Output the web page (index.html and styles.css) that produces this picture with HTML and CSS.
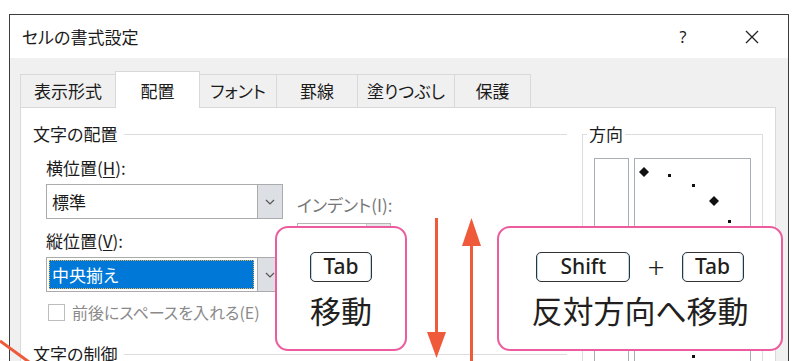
FILE: index.html
```html
<!DOCTYPE html>
<html lang="ja">
<head>
  <meta charset="UTF-8" />
  <title>セルの書式設定</title>
  <link rel="stylesheet" href="styles.css">
</head>
<body>
<div class="page">

  <!-- ダイアログ本体 -->
  <div class="dialog">
    <div class="titlebar">
      <span class="title">セルの書式設定</span>
      <span class="help">?</span>
      <span class="close">
        <svg width="14" height="14" viewBox="0 0 14 14"><path d="M1 1 L13 13 M13 1 L1 13" stroke="#222" stroke-width="1.3" fill="none"/></svg>
      </span>
    </div>

    <div class="dialog-body">
      <div class="tabs">
        <div class="tab tab-number">表示形式</div>
        <div class="tab tab-align active">配置</div>
        <div class="tab tab-font">フォント</div>
        <div class="tab tab-border">罫線</div>
        <div class="tab tab-fill">塗りつぶし</div>
        <div class="tab tab-protect">保護</div>
      </div>

      <div class="pane">
        <div class="align-col">
          <div class="group-head"><span>文字の配置</span><i class="rule"></i></div>

          <div class="fields">
            <div class="col-main">
              <div class="label">横位置(<u>H</u>):</div>
              <div class="select">
                <span class="value">標準</span>
                <span class="drop"><svg width="10" height="6" viewBox="0 0 10 6"><path d="M1 1 L5 5 L9 1" fill="none" stroke="#555" stroke-width="1.2"/></svg></span>
              </div>
              <div class="label label-next">縦位置(<u>V</u>):</div>
              <div class="select">
                <span class="value selected">中央揃え</span>
                <span class="drop"><svg width="10" height="6" viewBox="0 0 10 6"><path d="M1 1 L5 5 L9 1" fill="none" stroke="#555" stroke-width="1.2"/></svg></span>
              </div>
              <div class="check"><span class="box"></span>前後にスペースを入れる(E)</div>
            </div>

            <div class="col-indent">
              <div class="label dim">インデント(I):</div>
              <div class="spin"><span class="spin-btn"></span></div>
            </div>
          </div>

          <div class="group-head group-next"><span>文字の制御</span><i class="rule"></i></div>
        </div>

        <div class="orient">
          <div class="orient-label">方向</div>
          <div class="vert-box"></div>
          <div class="angle-box">
            <svg width="115" height="240" viewBox="1 1 115 240">
              <polygon points="10,9 15,14 10,19 5,14" />
              <rect x="34" y="16" width="3" height="3" />
              <rect x="58" y="26" width="3" height="3" />
              <polygon points="80,38 85,43 80,48 75,43" />
              <rect x="94" y="62" width="3" height="3" />
              <rect x="104" y="86" width="3" height="3" />
              <polygon points="109,108 114,113 109,118 104,113" />
              <rect x="104" y="137" width="3" height="3" />
              <rect x="94" y="161" width="3" height="3" />
              <polygon points="80,178 85,183 80,188 75,183" />
              <rect x="58" y="197" width="3" height="3" />
              <rect x="34" y="207" width="3" height="3" />
              <polygon points="10,207 15,212 10,217 5,212" />
            </svg>
          </div>
        </div>
      </div>
    </div>
  </div>

  <!-- 矢印 -->
  <svg class="arrows" width="800" height="361" viewBox="0 0 800 361">
    <line x1="0" y1="341" x2="29" y2="362" stroke="#ef5a3b" stroke-width="3"/>
    <line x1="436.5" y1="218" x2="436.5" y2="336" stroke="#ef5a3b" stroke-width="3"/>
    <polygon points="427,332 446,332 436.5,358" fill="#ef5a3b"/>
    <line x1="471.5" y1="362" x2="471.5" y2="243" stroke="#ef5a3b" stroke-width="3"/>
    <polygon points="462,246 481,246 471.5,218" fill="#ef5a3b"/>
  </svg>

  <!-- 吹き出し -->
  <div class="callout callout-tab">
    <div class="keys"><span class="key">Tab</span></div>
    <div class="action">移動</div>
  </div>

  <div class="callout callout-shift">
    <div class="keys">
      <span class="key key-wide">Shift</span>
      <span class="plus">+</span>
      <span class="key">Tab</span>
    </div>
    <div class="action">反対方向へ移動</div>
  </div>

</div>
</body>
</html>
```

FILE: styles.css
```css
* { box-sizing: border-box; }
body { margin: 0; background: #fff; font-family: "Noto Sans CJK JP", "Noto Sans", sans-serif; color: #1b1b1b; }
.page { position: relative; width: 800px; height: 361px; overflow: hidden; padding: 14px 0 0 9px; }

/* dialog */
.dialog {
  width: 780px; height: 420px;
  border: 1px solid #3d3d3d; background: #f0f0f0;
  font-feature-settings: "palt";
}
.titlebar { height: 43px; background: #fff; display: flex; align-items: center; padding-left: 12px; }
.title { flex: 1; font-size: 17px; line-height: 22px; }
.help { width: 20px; text-align: center; margin-right: 52px; font-family: "Noto Sans", sans-serif; font-size: 16px; line-height: 20px; }
.close { width: 14px; height: 14px; margin-right: 29px; display: flex; }

.dialog-body { padding: 13px 12px 0 10px; }

.tabs { display: flex; align-items: flex-end; height: 36px; }
.tab {
  height: 33px; margin-left: -1px;
  border: 1px solid #d9d9d9; border-bottom: none;
  display: flex; align-items: center; justify-content: center;
  font-size: 17px; line-height: 22px;
}
.tab:first-child { margin-left: 0; }
.tab.active { height: 37px; margin-bottom: -1px; padding-top: 1px; background: #fff; position: relative; z-index: 1; }
.tab-number { width: 96px; }
.tab-align { width: 85px; }
.tab-font { width: 78px; }
.tab-border { width: 82px; }
.tab-fill { width: 98px; }
.tab-protect { width: 77px; }

.pane {
  display: flex; gap: 15px; height: 300px;
  background: #fff; border: 1px solid #d9d9d9;
  padding: 15px 12px 0;
}

/* left side */
.align-col { width: 534px; }
.group-head { display: flex; align-items: center; height: 22px; font-size: 17px; line-height: 22px; }
.group-head .rule { flex: 1; height: 1px; background: #dcdcdc; margin-left: 7px; }
.group-next { margin-top: 21px; }

.fields { display: flex; padding-left: 13px; margin-top: 13px; }
.col-main { width: 237px; }
.label { font-size: 17px; line-height: 20px; height: 20px; margin-bottom: 6px; }
.label u { text-underline-offset: 2px; }
.label-next { margin-top: 12px; }

.select { display: flex; height: 35px; border: 1px solid #ababab; background: #fff; }
.select .value { flex: 1; padding-left: 5px; font-size: 17px; line-height: 33px; }
.select .value.selected {
  margin: 2px 3px 2px 2px; padding-left: 3px; line-height: 29px;
  background: #0078d7; color: #fff;
  outline: 1px dotted #f3b24a; outline-offset: -1px;
}
.select .drop { width: 25px; background: #dcdfe3; border-left: 1px solid #ababab; display: flex; align-items: center; justify-content: center; }

.check { display: flex; align-items: center; height: 20px; margin: 10px 0 0 2px; font-size: 16px; color: #8a8a8a; }
.check .box { width: 17px; height: 17px; border: 1px solid #bdbdbd; margin-right: 7px; }

.col-indent { margin-left: 14px; padding-top: 37px; }
.label.dim { color: #777; margin-bottom: 8px; }
.spin { width: 94px; height: 30px; border: 1px solid #b4b4b4; display: flex; justify-content: flex-end; }
.spin-btn { width: 24px; background: #e6e6e6; border-left: 1px solid #c8c8c8; }

/* orientation */
.orient {
  position: relative; width: 181px; height: 260px; margin-top: 11px;
  border: 1px solid #dcdcdc; padding: 23px 11px 0;
  display: flex; gap: 5px;
}
.orient-label { position: absolute; top: -12px; left: 4px; padding: 0 2px; background: #fff; font-size: 17px; line-height: 22px; }
.vert-box { width: 35px; height: 240px; border: 1px solid #a7aeb6; }
.angle-box { width: 117px; height: 240px; border: 1px solid #a7aeb6; }
.angle-box svg { display: block; fill: #111; }

/* overlays */
.arrows { position: absolute; left: 0; top: 0; z-index: 2; }

.callout {
  position: absolute; top: 226px; height: 125px; z-index: 3;
  background: #fff; border: 2.5px solid #ec5c9e; border-radius: 13px;
  display: flex; flex-direction: column; align-items: center;
  padding-top: 23.5px; color: #231f20;
}
.callout-tab { left: 275px; width: 132px; }
.callout-shift { left: 497px; width: 286px; }
.keys { display: flex; align-items: center; gap: 17px; height: 30px; }
.key {
  width: 62px; height: 30px;
  border: 1.5px solid #333; border-radius: 5px;
  box-shadow: inset 1px 0 0 #b5dbf3, inset -1px 0 0 #b5dbf3;
  font-family: "Noto Sans", sans-serif; font-size: 21px; font-weight: 500; line-height: 26px; text-align: center;
}
.key-wide { width: 94px; }
.plus { font-family: "Noto Sans", sans-serif; font-size: 30px; font-weight: 300; line-height: 30px; }
.action { margin-top: 8px; font-size: 31px; line-height: 40px; }
```
